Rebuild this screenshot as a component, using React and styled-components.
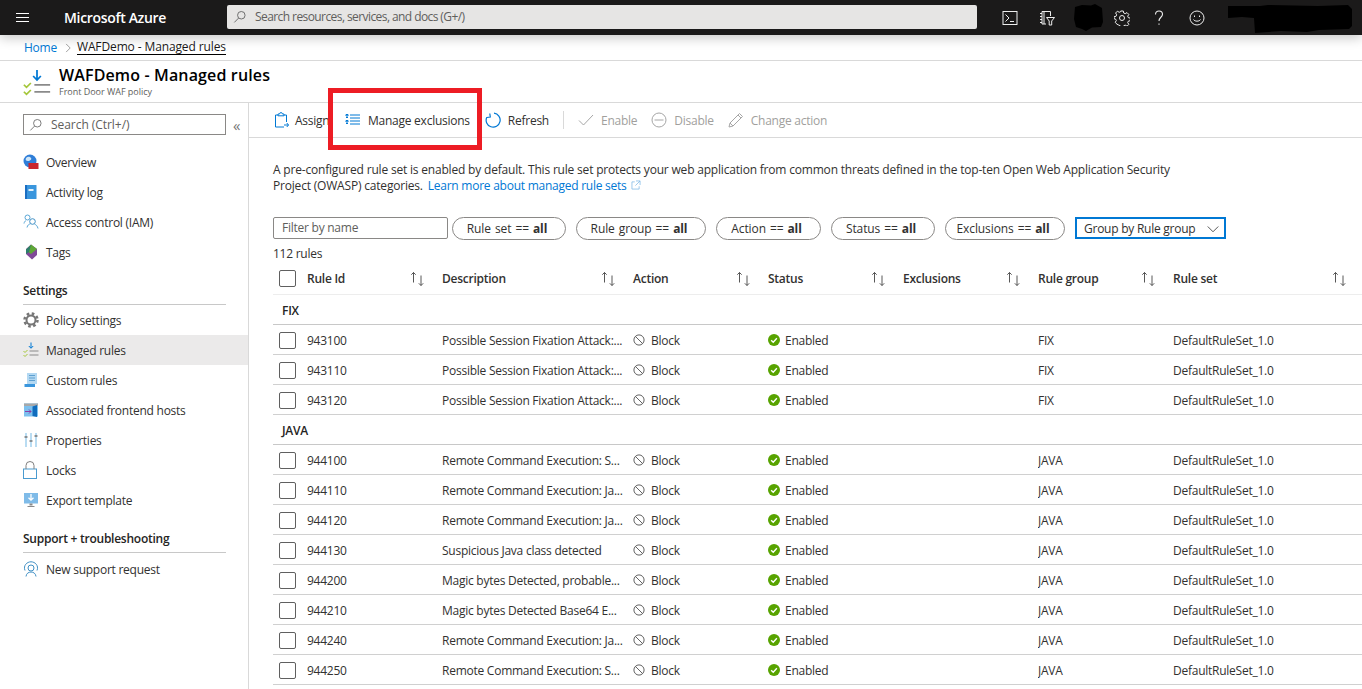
// Libraries
import React from 'react'
import styled, { createGlobalStyle } from 'styled-components'

const font = `"Open Sans", "Noto Sans", Arial, sans-serif`

const GROUPS = [
  {
    name: 'FIX',
    rules: [
      ['943100', 'Possible Session Fixation Attack:...'],
      ['943110', 'Possible Session Fixation Attack:...'],
      ['943120', 'Possible Session Fixation Attack:...']
    ]
  },
  {
    name: 'JAVA',
    rules: [
      ['944100', 'Remote Command Execution: S...'],
      ['944110', 'Remote Command Execution: Ja...'],
      ['944120', 'Remote Command Execution: Ja...'],
      ['944130', 'Suspicious Java class detected'],
      ['944200', 'Magic bytes Detected, probable...'],
      ['944210', 'Magic bytes Detected Base64 E...'],
      ['944240', 'Remote Command Execution: Ja...'],
      ['944250', 'Remote Command Execution: S...']
    ]
  }
]

const COLUMNS = ['Rule Id', 'Description', 'Action', 'Status', 'Exclusions', 'Rule group', 'Rule set']
const PILLS = [
  ['Rule set', 114],
  ['Rule group', 130],
  ['Action', 105],
  ['Status', 104],
  ['Exclusions', 120]
]

// Icons
const Svg = ({ size = 16, children, ...rest }) => (
  <svg width={size} height={size} viewBox="0 0 16 16" fill="none" {...rest}>{children}</svg>
)

const MenuIcon = () => (
  <Svg size={16} stroke="#fff" strokeWidth="1.2"><path d="M1 3.500h13M1 7.500h13M1 11.500h13" /></Svg>
)
const SearchIcon = ({ color = '#777' }) => (
  <Svg size={14} stroke={color} strokeWidth="1.1"><circle cx="9.500" cy="6" r="4.300" /><path d="M6.400 9.200 1.500 14.200" /></Svg>
)
const TerminalIcon = () => (
  <Svg stroke="#eee" strokeWidth="1"><rect x="1" y="1.500" width="14" height="13" /><path d="M3.500 4.500 7 8l-3.500 3.500M8 11.500h4" /></Svg>
)
const DirectoryIcon = () => (
  <Svg stroke="#eee" strokeWidth="1">
    <path d="M3 14V1.500h8.500V6M1 3.500h2M1 6.500h2M1 9.500h2M1 12.500h2M3 14h4M5 1.500V14M7.500 7.500h8L12.700 11v4h-2.500v-4z" />
  </Svg>
)
const GearIcon = () => (
  <Svg stroke="#eee" strokeWidth="1">
    <circle cx="8" cy="8" r="2.500" />
    <path d="M6.700 1h2.600l.4 2 1.500.7 1.800-1.100 1.800 1.800-1.100 1.800.7 1.500 2 .4v2.600l-2 .4-.7 1.500 1.100 1.800-1.800 1.800-1.800-1.100-1.500.7-.4 2H6.700l-.4-2-1.500-.7L3 14.200l-1.800-1.800 1.100-1.800-.7-1.500-1.600-.4V6.700l2-.4.7-1.500-1.100-1.800 1.800-1.800 1.800 1.100 1.500-.7z" />
  </Svg>
)
const HelpIcon = () => (
  <Svg stroke="#eee" strokeWidth="1.100"><path d="M4.500 4.500C4.500 2.500 6 1 8 1s3.500 1.500 3.500 3.300c0 3-3.500 3-3.500 6.700" /><path d="M8 13.500v1.200" /></Svg>
)
const SmileIcon = () => (
  <Svg stroke="#eee" strokeWidth="1"><circle cx="8" cy="8" r="7" /><path d="M4.500 9.500c1 2.200 6 2.200 7 0" /><path d="M5.500 5.500v1.500M10.500 5.500v1.500" /></Svg>
)
const RulesIcon = ({ size = 16 }) => (
  <Svg size={size}>
    <path d="M8 .5v5.500M5.800 4 8 6.300 10.200 4" stroke="#0078d4" strokeWidth="1" />
    <path d="M6.500 9h9M6.500 13h9" stroke="#8a8a8a" strokeWidth="1" />
    <path d="M.500 9l1.500 1.500L4.500 8M.500 13l1.500 1.500L4.500 12" stroke="#a4c639" strokeWidth="1" />
  </Svg>
)
const AssignIcon = () => (
  <Svg stroke="#0078d4" strokeWidth="1">
    <path d="M5 3H2.500v12H11M11 3h2.500v7" />
    <path d="M5 3.800V2h1.500l.7-1.300h1.600L9.500 2H11v1.800z" />
    <path d="M11 13h4.500M13.800 11l1.700 2-1.700 2" />
  </Svg>
)
const ListIcon = () => (
  <Svg stroke="#0078d4" strokeWidth="1">
    <path d="M5 3h10M5 6h10M5 9h10M5 12h10" />
    <path d="M1 2.500h2v1.500H1zM1 8.500h2V10H1zM1 5.500h2M1 11.500h2" />
  </Svg>
)
const RefreshIcon = () => (
  <Svg stroke="#0078d4" strokeWidth="1.200">
    <path d="M9 1.200a7 7 0 1 1-7.200 4" />
    <path d="M4.800 1.500 5.300 5 1.800 5.500" />
  </Svg>
)
const CheckIcon = () => (
  <Svg stroke="#a6a6a6" strokeWidth="1"><path d="M1 8.500 5.500 13 15 3" /></Svg>
)
const MinusCircleIcon = () => (
  <Svg stroke="#a6a6a6" strokeWidth="1"><circle cx="8" cy="8" r="7" /><path d="M3.500 8h9" /></Svg>
)
const PencilIcon = () => (
  <Svg stroke="#a6a6a6" strokeWidth="1"><path d="M1 15l1-4L11.500 1.500l3 3L5 14zM2 11l3 3M10 3l3 3" /></Svg>
)
const SortIcon = () => (
  <Svg stroke="#444" strokeWidth="0.900"><path d="M3.500 11.500V1.500M1.300 3.700 3.500 1.500l2.200 2.200" /><path d="M11 4.500v10M8.800 12.300l2.200 2.200 2.200-2.200" /></Svg>
)
const BlockIcon = () => (
  <Svg size={12} stroke="#505050" strokeWidth="1.200"><circle cx="8" cy="8" r="6.800" /><path d="M3.200 3.200l9.600 9.600" /></Svg>
)
const EnabledIcon = () => (
  <Svg size={12}>
    <circle cx="8" cy="8" r="8" fill="#57a300" />
    <path d="M4.200 8.300 7 11l4.800-5.300" stroke="#fff" strokeWidth="1.800" />
  </Svg>
)
const ChevronIcon = () => (
  <Svg size={12} stroke="#333" strokeWidth="1.100"><path d="M1 6 8 13 15 6" /></Svg>
)
const ExternalIcon = () => (
  <Svg size={10} stroke="#7fb8e6" strokeWidth="1.200"><path d="M6 3H1.500v11.500H13V10M8 1.500h6.500V8M14.500 1.500 7 9" /></Svg>
)
// the scribbled-out parts of the header
const SmallScribble = () => (
  <svg width="29" height="27" viewBox="0 0 29 27" fill="#000">
    <path d="M1 3 8 1l9 .5L21 0l7 4 1 14-2 5-9 .5L12 27l-4-2-6-2-2-8z" />
  </svg>
)
const WideScribble = () => (
  <svg width="125" height="30" viewBox="0 0 125 30" fill="#000">
    <path d="M0 3h32l8-1 50 1 30-1 4 4v17l-3 3-30 1-12 2-26-1-26 2-1-15-12-1-14 1z" />
  </svg>
)

const NAV_ICONS = {
  overview: (
    <Svg>
      <circle cx="7" cy="7" r="6.500" fill="#2f7ed8" />
      <path d="M3 4c2-2 4-1 5 0s-1 3-3 3-3-1-2-3z" fill="#cfe6f8" />
      <rect x="5.500" y="9" width="10" height="6" fill="#c9252d" />
    </Svg>
  ),
  log: (
    <Svg>
      <rect x="2" y="1" width="11.500" height="14" rx="0.500" fill="#3a96dd" />
      <rect x="2" y="1" width="2" height="14" fill="#1b6ec2" />
      <rect x="5.500" y="5" width="5" height="2" fill="#e4f1fb" />
    </Svg>
  ),
  iam: (
    <Svg stroke="#59a6d6" strokeWidth="1">
      <circle cx="4.500" cy="3.500" r="2.500" />
      <circle cx="9.500" cy="7.500" r="2.800" stroke="#3f8fc4" />
      <path d="M4 13.500c.5-2.500 2-3.300 3.500-3.800M15 14.500c-.5-2.500-2-3.800-3.500-4.400M1 9.500c.3-1.600 1-2.300 2-3" />
    </Svg>
  ),
  tags: (
    <Svg>
      <path d="M8 .5 14 5v6l-5 4.500L3 10V5z" fill="#804998" />
      <path d="M8 .5 14 5 8 10 3 6z" fill="#5ea836" />
      <path d="M3 5.500 8 1 6 8 3 10z" fill="#2d7d6c" />
    </Svg>
  ),
  policy: (
    <Svg stroke="#767676">
      <circle cx="8" cy="8" r="4.500" strokeWidth="2" />
      <circle cx="8" cy="8" r="6.500" strokeWidth="2.500" strokeDasharray="2.600 2.500" />
    </Svg>
  ),
  rules: <RulesIcon />,
  custom: (
    <Svg>
      <path d="M4 1h10v11H4z" fill="#b3d8f2" />
      <path d="M1.500 12H12v3H1.500z" fill="#3a96dd" />
      <path d="M6 3.500h6M6 6h6M6 8.500h6" stroke="#5ea0d0" strokeWidth="1" />
    </Svg>
  ),
  hosts: (
    <Svg>
      <rect x="1" y="1.500" width="14" height="13" fill="#7cc0ee" />
      <rect x="1" y="1.500" width="14" height="2.500" fill="#a8a8a8" />
      <path d="M9.500 4.500 14 3v12l-4.500-1z" fill="#0f6cbd" />
      <path d="M2 9.500h6M6 7.500l2 2-2 2" stroke="#8a3ea8" strokeWidth="1" />
    </Svg>
  ),
  properties: (
    <Svg>
      <path d="M3 1v14M8 1v14M13 1v14" stroke="#b9dcf2" strokeWidth="2" />
      <path d="M1.500 5h3M6.500 9h3M11.500 4h3" stroke="#777" strokeWidth="1.500" />
    </Svg>
  ),
  locks: (
    <svg width="16" height="18" viewBox="0 0 16 18" fill="none" strokeWidth="1">
      <rect x="0.500" y="8" width="13" height="9.500" stroke="#4a9bd0" />
      <path d="M3 8V4.500a4 4 0 0 1 8 0V8" stroke="#808080" />
    </svg>
  ),
  export: (
    <Svg>
      <rect x="1" y="1" width="14" height="10.500" fill="#7fbbe8" />
      <path d="M8 2v6M5.500 5.700 8 8.200l2.500-2.500" stroke="#fff" strokeWidth="1.300" />
      <path d="M6.500 11.500h3v2h-3zM4.500 14h7v1h-7z" fill="#8a8a8a" />
    </Svg>
  ),
  support: (
    <Svg stroke="#3f8fc4" strokeWidth="1">
      <circle cx="8" cy="7" r="3" />
      <path d="M2 9.500C0 4.500 4 .8 8 .8s8 3.700 6 8.700M3 15.500c.3-3 2.500-4.500 5-4.500s4.700 1.500 5 4.500" />
    </Svg>
  )
}

const NAV_TOP = [
  ['overview', 'Overview'],
  ['log', 'Activity log'],
  ['iam', 'Access control (IAM)'],
  ['tags', 'Tags']
]
const NAV_SETTINGS = [
  ['policy', 'Policy settings'],
  ['rules', 'Managed rules'],
  ['custom', 'Custom rules'],
  ['hosts', 'Associated frontend hosts'],
  ['properties', 'Properties'],
  ['locks', 'Locks'],
  ['export', 'Export template']
]

const NavList = ({ items }) => items.map(([key, label]) => (
  <NavItem key={key} $active={key === 'rules'}>
    <NavIcon>{NAV_ICONS[key]}</NavIcon>
    {label}
  </NavItem>
))

const App = () => (
  <Page>
    <GlobalStyle />
    <TopBar>
      <MenuButton><MenuIcon /></MenuButton>
      <Brand>Microsoft Azure</Brand>
      <GlobalSearch><SearchIcon color="#6b6b6b" /><span>Search resources, services, and docs (G+/)</span></GlobalSearch>
      <TopIcons>
        <TopIcon><TerminalIcon /></TopIcon>
        <TopIcon><DirectoryIcon /></TopIcon>
        <Scribble $left={8}><SmallScribble /></Scribble>
        <TopIcon><GearIcon /></TopIcon>
        <TopIcon><HelpIcon /></TopIcon>
        <TopIcon><SmileIcon /></TopIcon>
        <Scribble $left={12}><WideScribble /></Scribble>
      </TopIcons>
    </TopBar>

    <Breadcrumbs>
      <Crumb>Home</Crumb>
      <CrumbSep>
        <Svg size={10} stroke="#666" strokeWidth="1"><path d="M5 1.500 11.500 8 5 14.500" /></Svg>
      </CrumbSep>
      <CurrentCrumb>WAFDemo - Managed rules</CurrentCrumb>
    </Breadcrumbs>

    <TitleBar>
      <TitleIcon><RulesIcon size={28} /></TitleIcon>
      <div>
        <Title>WAFDemo - Managed rules</Title>
        <Subtitle>Front Door WAF policy</Subtitle>
      </div>
    </TitleBar>

    <Body>
      <Sidebar>
        <SideSearchRow>
          <SideSearch><SearchIcon /><span>Search (Ctrl+/)</span></SideSearch>
          <Collapse>«</Collapse>
        </SideSearchRow>
        <NavList items={NAV_TOP} />
        <NavHeading>Settings</NavHeading>
        <NavList items={NAV_SETTINGS} />
        <NavHeading>Support + troubleshooting</NavHeading>
        <SupportItem><NavIcon>{NAV_ICONS.support}</NavIcon>New support request</SupportItem>
      </Sidebar>

      <Main>
        <CommandBar>
          <AssignCommand><AssignIcon />Assign</AssignCommand>
          <ManageCommand><ListIcon />Manage exclusions</ManageCommand>
          <RefreshCommand><RefreshIcon />Refresh</RefreshCommand>
          <Divider />
          <Command $disabled><CheckIcon />Enable</Command>
          <Command $disabled><MinusCircleIcon />Disable</Command>
          <Command $disabled><PencilIcon />Change action</Command>
          <Highlight />
        </CommandBar>

        <Content>
          <Intro>
            A pre-configured rule set is enabled by default. This rule set protects your web application from common threats defined in the top-ten Open Web Application Security Project (OWASP) categories.{' '}
            <IntroLink>Learn more about managed rule sets</IntroLink>
            <ExternalMark><ExternalIcon /></ExternalMark>
          </Intro>

          <Filters>
            <FilterInput>Filter by name</FilterInput>
            {PILLS.map(([label, width]) => (
              <Pill key={label} $width={width}>{label} == <b>all</b></Pill>
            ))}
            <GroupSelect>Group by Rule group<ChevronIcon /></GroupSelect>
          </Filters>

          <Count>112 rules</Count>

          <HeaderRow>
            <CheckCell><Checkbox /></CheckCell>
            {COLUMNS.map(col => (
              <HeaderCell key={col}>{col}<SortIcon /></HeaderCell>
            ))}
          </HeaderRow>

          {GROUPS.map(group => (
            <React.Fragment key={group.name}>
              <GroupRow>{group.name}</GroupRow>
              {group.rules.map(([id, description]) => (
                <Row key={id}>
                  <CheckCell><Checkbox /></CheckCell>
                  <Cell>{id}</Cell>
                  <Cell>{description}</Cell>
                  <BlockCell><BlockIcon />Block</BlockCell>
                  <StatusCell><EnabledIcon />Enabled</StatusCell>
                  <Cell />
                  <Cell>{group.name}</Cell>
                  <Cell>DefaultRuleSet_1.0</Cell>
                </Row>
              ))}
            </React.Fragment>
          ))}
        </Content>
      </Main>
    </Body>
  </Page>
)

const GlobalStyle = createGlobalStyle`
  html, body {
    margin: 0;
    height: 100%;
    overflow: hidden;
    background: #fff;
  }
  body {
    font-family: ${font};
    font-size: 12px;
    letter-spacing: -0.25px;
    color: #323130;
  }
  svg {
    display: block;
    flex: none;
  }
`

const Page = styled.div`
  height: 689px;
  overflow: hidden;
  display: flex;
  flex-direction: column;
`

const TopBar = styled.header`
  flex: none;
  height: 35px;
  background: #1b1a1a;
  display: flex;
  align-items: center;
  box-shadow: 0 3px 12px rgba(0, 0, 0, 0.22);
  position: relative;
`

const MenuButton = styled.div`
  width: 64px;
  padding-left: 15px;
  box-sizing: border-box;
`

const Brand = styled.div`
  width: 163px;
  color: #fff;
  font-size: 14px;
  font-weight: 600;
  letter-spacing: -0.33px;
`

const GlobalSearch = styled.div`
  width: 750px;
  height: 24px;
  margin-top: -2px;
  background: #e6e5e4;
  border-radius: 2px;
  display: flex;
  align-items: center;
  gap: 8px;
  padding-left: 6px;
  box-sizing: border-box;
  color: #605e5c;
  letter-spacing: -0.58px;
`

const TopIcons = styled.div`
  margin-left: 14px;
  display: flex;
  align-items: center;
`

const TopIcon = styled.div`
  width: 37.5px;
  height: 35px;
  display: flex;
  align-items: center;
  justify-content: center;
`

const Scribble = styled.div`
  margin-left: ${p => p.$left}px;
`

const Breadcrumbs = styled.nav`
  flex: none;
  height: 25px;
  padding-left: 24px;
  display: flex;
  align-items: center;
  border-bottom: 1px solid #d9d9d9;
`

const Crumb = styled.span`
  color: #0078d4;
`

const CrumbSep = styled.span`
  margin: 0 4px 0 6px;
`

const CurrentCrumb = styled.span`
  color: #1b1a19;
  border-bottom: 1px solid #000;
  line-height: 14px;
  letter-spacing: -0.12px;
`

const TitleBar = styled.div`
  flex: none;
  height: 41px;
  display: flex;
  align-items: center;
  gap: 8px;
  padding-left: 23px;
  border-bottom: 1px solid #d9d9d9;
`

const TitleIcon = styled.div`
  margin-top: 2px;
`

const Title = styled.h1`
  margin: 0;
  font-size: 16px;
  line-height: 20px;
  font-weight: 600;
  letter-spacing: 0.14px;
  color: #000;
`

const Subtitle = styled.div`
  font-size: 9px;
  line-height: 12px;
  margin-top: 1px;
  color: #605e5c;
  letter-spacing: -0.02px;
`

const Body = styled.div`
  flex: 1;
  min-height: 0;
  display: flex;
`

const Sidebar = styled.aside`
  flex: none;
  width: 248px;
  border-right: 1px solid #d9d9d9;
  padding-top: 11px;
`

const SideSearchRow = styled.div`
  display: flex;
  align-items: center;
  padding-left: 23px;
  margin-bottom: 12px;
`

const SideSearch = styled.div`
  width: 203px;
  height: 21px;
  box-sizing: border-box;
  border: 1px solid #8a8886;
  display: flex;
  align-items: center;
  gap: 8px;
  padding-left: 5px;
  color: #605e5c;
  letter-spacing: -0.05px;
`

const Collapse = styled.div`
  margin-left: 7px;
  font-size: 15px;
  line-height: 18px;
  color: #777;
`

const NavItem = styled.div`
  height: 30px;
  display: flex;
  align-items: center;
  gap: 7px;
  padding-left: 23px;
  background: ${p => (p.$active ? '#ebeaea' : 'transparent')};
`

const SupportItem = styled(NavItem)`
  margin-top: 1px;
`

const NavIcon = styled.span`
  width: 16px;
  display: flex;
  justify-content: center;
`

const NavHeading = styled.div`
  margin: 15px 22px 0 23px;
  padding-bottom: 5px;
  height: 17px;
  border-bottom: 1px solid #c8c8c8;
  font-weight: 600;
  color: #252423;
`

const Main = styled.main`
  flex: 1;
  min-width: 0;
`

const CommandBar = styled.div`
  height: 34px;
  border-bottom: 1px solid #d9d9d9;
  display: flex;
  align-items: center;
  padding-left: 24px;
  position: relative;
`

const Command = styled.div`
  display: flex;
  align-items: center;
  gap: ${p => (p.$disabled ? 7 : 6)}px;
  margin-right: 14px;
  color: ${p => (p.$disabled ? '#a19f9d' : '#323130')};
`

const AssignCommand = styled(Command)`
  width: 72px;
  margin-right: 0;
`

const ManageCommand = styled(Command)`
  gap: 7px;
  margin-right: 15px;
`

const RefreshCommand = styled(Command)`
  gap: 7px;
  margin-right: 14px;
`

const Divider = styled.div`
  width: 1px;
  height: 18px;
  background: #d9d9d9;
  margin-right: 14px;
`

const Highlight = styled.div`
  position: absolute;
  left: 79px;
  top: -15px;
  width: 154px;
  height: 62px;
  box-sizing: border-box;
  border: 5px solid #ed1c24;
`

const Content = styled.div`
  padding: 24px 0 0 24px;
`

const Intro = styled.p`
  margin: 0 0 22px;
  width: 920px;
  line-height: 16px;
  letter-spacing: -0.19px;
`

const IntroLink = styled.span`
  color: #0078d4;
  margin-left: 2px;
  letter-spacing: -0.25px;
`

const ExternalMark = styled.span`
  display: inline-block;
  margin-left: 4px;
`

const Filters = styled.div`
  display: flex;
  align-items: center;
  height: 24px;
`

const FilterInput = styled.div`
  width: 175px;
  height: 22px;
  box-sizing: border-box;
  border: 1px solid #8a8886;
  border-radius: 2px;
  padding-left: 8px;
  line-height: 20px;
  color: #605e5c;
  margin-right: 4px;
`

const Pill = styled.div`
  width: ${p => p.$width}px;
  height: 23px;
  margin-right: 10px;
  padding-right: 4px;
  box-sizing: border-box;
  border: 1px solid #8a8886;
  border-radius: 12px;
  text-align: center;
  line-height: 21px;
  letter-spacing: -0.1px;
  word-spacing: 1px;
  b {
    font-weight: 700;
  }
`

const GroupSelect = styled.div`
  width: 151px;
  height: 22px;
  box-sizing: border-box;
  border: 2px solid #0078d4;
  display: flex;
  align-items: center;
  justify-content: space-between;
  padding: 0 5px 0 7px;
`

const Count = styled.div`
  height: 17px;
  margin-top: 5px;
  line-height: 17px;
`

const grid = `
  display: grid;
  grid-template-columns: 34px 135px 191px 135px 135px 135px 135px 1fr;
`

const HeaderRow = styled.div`
  ${grid}
  height: 31px;
  margin-top: 2px;
  padding-bottom: 1px;
  border-bottom: 1px solid #ededed;
  box-sizing: border-box;
`

const CheckCell = styled.div`
  padding-left: 6px;
  display: flex;
  align-items: center;
`

const Checkbox = styled.div`
  width: 17px;
  height: 17px;
  box-sizing: border-box;
  border: 1px solid #5f5f5f;
  border-radius: 2px;
`

const HeaderCell = styled.div`
  display: flex;
  align-items: center;
  justify-content: space-between;
  padding-right: 16px;
  font-weight: 600;
  color: #323130;
  &:last-child {
    padding-right: 14px;
  }
`

const GroupRow = styled.div`
  height: 30px;
  box-sizing: border-box;
  border-bottom: 1px solid #c8c8c8;
  padding-left: 9px;
  line-height: 31px;
  font-weight: 600;
  color: #252423;
`

const Row = styled.div`
  ${grid}
  height: 30px;
  box-sizing: border-box;
  padding-top: 1px;
  border-bottom: 1px solid #d0d0d0;
`

const Cell = styled.div`
  display: flex;
  align-items: center;
  white-space: nowrap;
  overflow: hidden;
`

const BlockCell = styled(Cell)`
  gap: 6px;
`

const StatusCell = styled(Cell)`
  gap: 5px;
`

export default App
